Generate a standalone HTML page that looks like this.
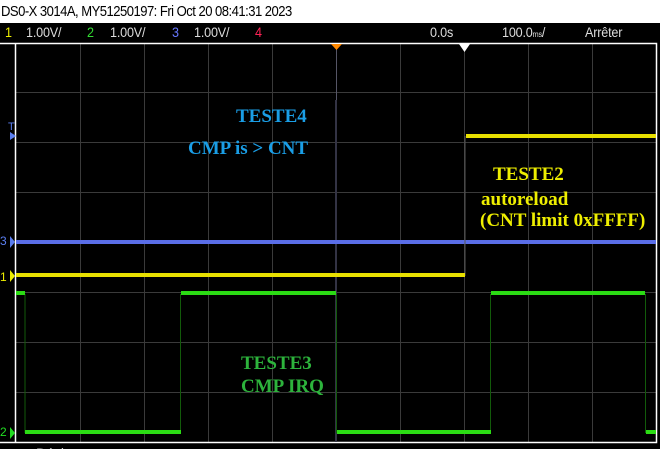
<!DOCTYPE html>
<html><head><style>
body{margin:0;width:660px;height:449px;background:#000;position:relative;overflow:hidden;font-family:"Liberation Sans",sans-serif}
.hdr{position:absolute;left:0;top:0;width:660px;height:23px;background:#fff;color:#000;font-size:15px;line-height:23px;padding-left:1px;letter-spacing:-0.6px;transform-origin:0 0;}
.hdr span{display:inline-block;transform:scaleX(0.87);transform-origin:0 0}
.bar{position:absolute;top:23px;left:0;width:660px;height:19px;font-size:14px;line-height:19px;color:#ddd;letter-spacing:-0.2px}
.bar span{position:absolute;transform:scaleX(0.9);transform-origin:0 0}
.a{position:absolute;font-family:"Liberation Serif",serif;font-weight:bold;font-size:19px}
</style></head><body>
<div class="hdr"><span>DS0-X 3014A, MY51250197: Fri Oct 20 08:41:31 2023</span></div>
<div class="bar">
<span style="left:5px;color:#ee0">1</span><span style="left:26px">1.00V/</span>
<span style="left:87px;color:#3d3">2</span><span style="left:110px">1.00V/</span>
<span style="left:172px;color:#67f">3</span><span style="left:194px">1.00V/</span>
<span style="left:255px;color:#f25">4</span>
<span style="left:430px">0.0s</span><span style="left:502px">100.0<small style="font-size:8px">ms</small>/</span><span style="left:585px">Arrêter</span>
</div>
<svg width="660" height="449" style="position:absolute;left:0;top:0">
<g stroke="#3a3a3a" stroke-width="1">
<path d="M80.5 44V442M144.5 44V442M208.5 44V442M272.5 44V442M400.5 44V442M464.5 44V442M528.5 44V442M592.5 44V442"/>
<path d="M16 92.5H656M16 142.5H656M16 192.5H656M16 242.5H656M16 292.5H656M16 342.5H656M16 392.5H656"/>
</g>
<path d="M336.5 44V442" stroke="#556" stroke-width="1"/>
<path d="M0 43.5H656.5V442.5H0M15.5 43V443" stroke="#fff" fill="none" stroke-width="1.5"/>
<path d="M331 44h11l-5.5 6z" fill="#f80"/>
<path d="M459 44h11l-5.5 8z" fill="#fff"/>
<path d="M336 100V442" stroke="#334" stroke-width="2"/>
<rect x="16" y="240" width="640" height="4" fill="#5a6ee8"/>
<path d="M465 136V276" stroke="#555" stroke-width="1"/>
<rect x="16" y="273" width="449" height="4" fill="#e8e000"/>
<rect x="466" y="134" width="190" height="4" fill="#e8e000"/>
<path d="M25 294V433M180.5 294V433M336.5 294V433M490.5 294V433M645.5 294V433" stroke="#125a0a" stroke-width="1"/>
<g fill="#2bdc14">
<rect x="16" y="291" width="9" height="4"/>
<rect x="25" y="430" width="156" height="4"/>
<rect x="181" y="291" width="155" height="4"/>
<rect x="337" y="430" width="154" height="4"/>
<rect x="491" y="291" width="154" height="4"/>
<rect x="646" y="430" width="10" height="4"/>
</g>
<text x="8" y="130" fill="#5a7ef0" font-size="11">T</text><path d="M10 132l6 4-6 4z" fill="#5a7ef0"/>
<text x="0" y="245" fill="#5a7ef0" font-size="12">3</text><path d="M10 236l5 6-5 6z" fill="#5a7ef0"/>
<text x="0" y="281" fill="#ee0" font-size="12">1</text><path d="M10 270l5 6-5 6z" fill="#ee0"/>
<text x="0" y="436" fill="#2d2" font-size="12">2</text><path d="M10 427l5 6-5 6z" fill="#2d2"/>
<text x="36" y="458" fill="#ccc" font-size="14">Déclen</text>
</svg>
<div class="a" style="left:236px;top:106px;color:#1a9ee6">TESTE4</div>
<div class="a" style="left:188px;top:138px;color:#1a9ee6">CMP is &gt; CNT</div>
<div class="a" style="left:493px;top:164px;color:#ee0">TESTE2</div>
<div class="a" style="left:481px;top:189px;color:#ee0">autoreload</div>
<div class="a" style="left:480px;top:210px;color:#ee0">(CNT limit 0xFFFF)</div>
<div class="a" style="left:241px;top:353px;color:#2db33c">TESTE3</div>
<div class="a" style="left:241px;top:376px;color:#2db33c">CMP IRQ</div>
</body></html>
